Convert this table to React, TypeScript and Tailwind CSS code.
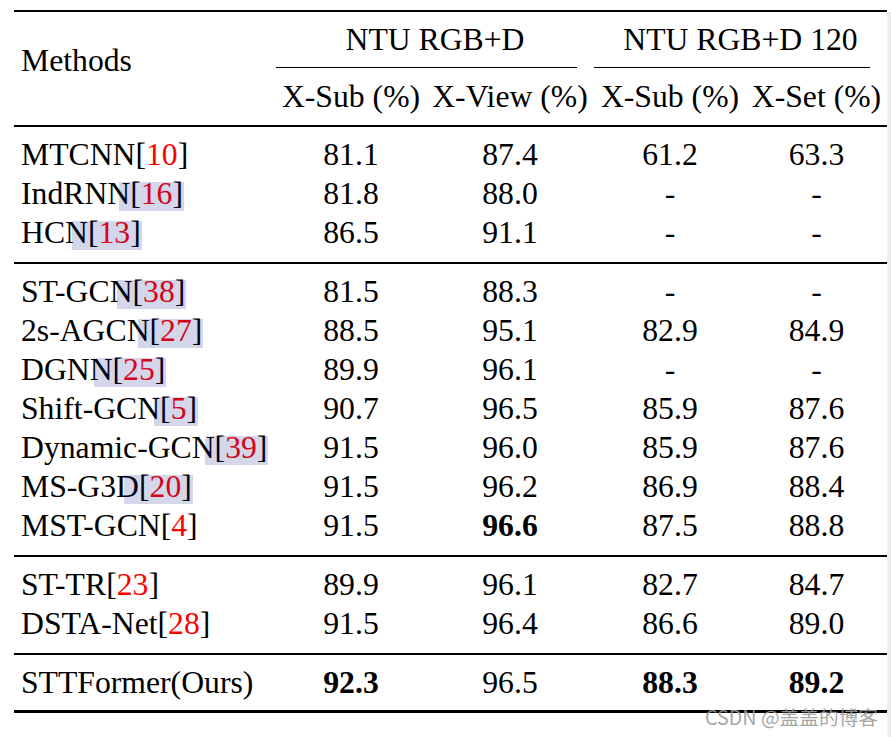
import clsx from 'clsx';

type Row = {
  name: string;
  ref: string;
  hl?: string;
  vals: string[];
  bold?: number[];
};

const GROUPS: Row[][] = [
  [
    { name: 'MTCNN', ref: '10', vals: ['81.1', '87.4', '61.2', '63.3'] },
    { name: 'IndRNN', ref: '16', hl: '-left-[11px]', vals: ['81.8', '88.0', '-', '-'] },
    { name: 'HCN', ref: '13', hl: '-left-[16px]', vals: ['86.5', '91.1', '-', '-'] }
  ],
  [
    { name: 'ST-GCN', ref: '38', hl: '-left-[16px]', vals: ['81.5', '88.3', '-', '-'] },
    { name: '2s-AGCN', ref: '27', hl: '-left-[12px]', vals: ['88.5', '95.1', '82.9', '84.9'] },
    { name: 'DGNN', ref: '25', hl: '-left-[19px]', vals: ['89.9', '96.1', '-', '-'] },
    { name: 'Shift-GCN', ref: '5', hl: '-left-[6px]', vals: ['90.7', '96.5', '85.9', '87.6'] },
    { name: 'Dynamic-GCN', ref: '39', hl: '-left-[10px]', vals: ['91.5', '96.0', '85.9', '87.6'] },
    { name: 'MS-G3D', ref: '20', hl: '-left-[15px]', vals: ['91.5', '96.2', '86.9', '88.4'] },
    { name: 'MST-GCN', ref: '4', vals: ['91.5', '96.6', '87.5', '88.8'], bold: [1] }
  ],
  [
    { name: 'ST-TR', ref: '23', vals: ['89.9', '96.1', '82.7', '84.7'] },
    { name: 'DSTA-Net', ref: '28', vals: ['91.5', '96.4', '86.6', '89.0'] }
  ],
  [{ name: 'STTFormer(Ours)', ref: '', vals: ['92.3', '96.5', '88.3', '89.2'], bold: [0, 2, 3] }]
];

const COLS = 'grid grid-cols-[262px_150px_168px_152px_141px]';

const Cite = ({ row }: { row: Row }) => {
  if (!row.ref) return null;
  return (
    <span className="relative">
      [<span className="text-[#ff0000]">{row.ref}</span>]
      {row.hl && (
        <span
          className={clsx(
            'absolute top-[6px] bottom-0 -right-[1px] bg-[rgba(16,27,138,0.18)]',
            row.hl
          )}
        />
      )}
    </span>
  );
};

const App = () => {
  return (
    <div className="flex w-[891px] h-[737px] bg-white text-black font-['Liberation_Serif',serif] text-[31.7px] leading-[39px]">
      <div className="relative w-[887px] pt-[10px] pl-[14px]">
        <div className="h-[2px] bg-black" />

        {/* header */}
        <div className={COLS}>
          <div className="row-span-2 pl-[7px] pt-[29px]">Methods</div>
          <div className="col-span-2 pt-[8px]">
            <div className="text-center">NTU RGB+D</div>
            <div className="mt-[8px] mr-[17px] h-px bg-black" />
          </div>
          <div className="col-span-2 pt-[8px]">
            <div className="text-center">NTU RGB+D 120</div>
            <div className="mt-[8px] mr-[17px] h-px bg-black" />
          </div>
          <div className="py-[9px] text-center">X-Sub (%)</div>
          <div className="py-[9px] text-center">X-View (%)</div>
          <div className="py-[9px] text-center">X-Sub (%)</div>
          <div className="py-[9px] text-center">X-Set (%)</div>
        </div>
        <div className="h-[2px] bg-black" />

        {GROUPS.map((group, gi) => (
          <div key={gi}>
            <div className="pt-[8px] pb-[10px]">
              {group.map((row) => (
                <div key={row.name} className={COLS}>
                  <div className="pl-[7px] whitespace-nowrap">
                    {row.name}
                    <Cite row={row} />
                  </div>
                  {row.vals.map((v, i) => (
                    <div
                      key={i}
                      className={clsx('text-center', row.bold?.includes(i) && 'font-bold')}
                    >
                      {v}
                    </div>
                  ))}
                </div>
              ))}
            </div>
            <div
              className={clsx(
                'bg-black',
                gi === GROUPS.length - 1 ? 'h-[3px] -mt-[2px]' : 'h-[2px]'
              )}
            />
          </div>
        ))}

        <span className="absolute left-[705px] top-[704px] text-[19.7px] leading-[26px] text-[#9a9a9a]/90 font-['Noto_Sans_CJK_SC',sans-serif] whitespace-nowrap">
          CSDN @盖盖的博客
        </span>
      </div>
      <div className="flex-1 mt-[12px] bg-gradient-to-r from-[#f4f4f4] to-[#e9e9e9]" />
    </div>
  );
};

export default App;
